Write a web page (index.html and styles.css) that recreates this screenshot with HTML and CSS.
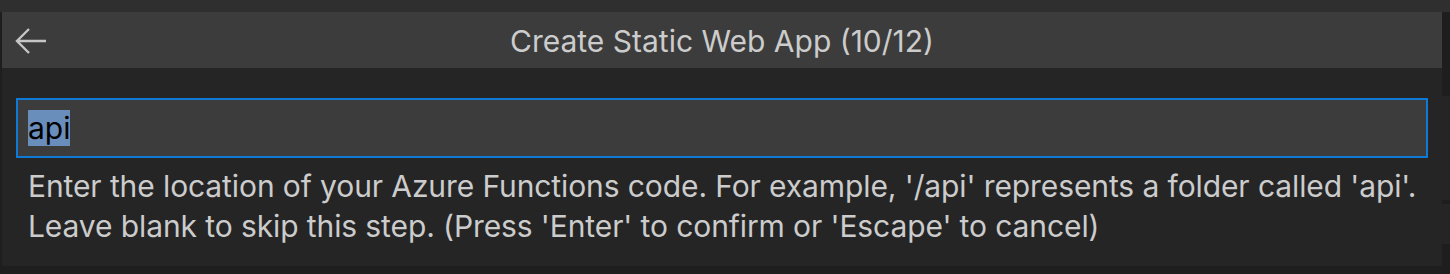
FILE: index.html
```html
<!DOCTYPE html>
<html lang="en">
<head>
    <meta charset="UTF-8">
    <meta name="viewport" content="width=device-width, initial-scale=1.0">
    <title>Create Static Web App</title>
    <link rel="stylesheet" href="styles.css">
</head>
<body>
    <div class="workbench">
        <div class="quick-input">
            <div class="title-bar">
                <button class="back-btn" aria-label="Back">
                    <svg width="32" height="28" viewBox="0 0 32 28">
                        <path d="M14 2 L2 14 L14 26 M2 14 H31" fill="none" stroke="#c5c5c5" stroke-width="2.4"/>
                    </svg>
                </button>
                <div class="title">Create Static Web App (10/12)</div>
            </div>
            <div class="body">
                <div class="input-box">
                    <span class="selected-text">api</span>
                </div>
                <div class="message">
                    Enter the location of your Azure Functions code. For example, '/api' represents a folder called 'api'.<br>
                    Leave blank to skip this step. (Press 'Enter' to confirm or 'Escape' to cancel)
                </div>
            </div>
        </div>
        <div class="side-strip">
            <div class="strip-bar one"></div>
            <div class="strip-bar two"></div>
        </div>
    </div>
</body>
</html>
```

FILE: styles.css
```css
html, body {
    margin: 0;
    padding: 0;
    background: #1e1e1e;
    height: 274px;
    overflow: hidden;
}

body {
    font-family: Inter, 'Noto Sans', sans-serif;
    color: #cccccc;
    border-top: 12px solid #2f2f2f;
}

.workbench {
    display: flex;
    height: 262px;
}

.quick-input {
    margin-left: 2px;
    width: 1440px;
    height: 254px;
    display: flex;
    flex-direction: column;
}

.title-bar {
    height: 56px;
    background: #3c3c3c;
    display: flex;
    align-items: center;
    position: relative;
}

.back-btn {
    background: none;
    border: none;
    padding: 0;
    margin-left: 13px;
    margin-top: 2px;
    display: flex;
    cursor: pointer;
}

.title {
    position: absolute;
    left: 0;
    right: 0;
    top: 11px;
    text-align: center;
    font-size: 30px;
    line-height: 36px;
    color: #cccccc;
    pointer-events: none;
}

.body {
    flex: 1;
    background: #252526;
    padding: 30px 14px 0 14px;
}

.input-box {
    height: 56px;
    border: 2px solid #0e7ad3;
    background: #3c3c3c;
    display: flex;
    align-items: center;
    padding-left: 10px;
}

.selected-text {
    background: #6a8ebc;
    color: #000;
    font-size: 30px;
    line-height: 36px;
}

.message {
    font-size: 30px;
    line-height: 40px;
    letter-spacing: -0.1px;
    padding: 8px 0 0 12px;
    color: #cccccc;
}

.side-strip {
    flex: 1;
    display: flex;
    flex-direction: column;
}

.strip-bar {
    background: #252526;
}

.strip-bar.one {
    height: 104px;
    margin-top: 84px;
}

.strip-bar.two {
    height: 40px;
    margin-top: 4px;
}
```
